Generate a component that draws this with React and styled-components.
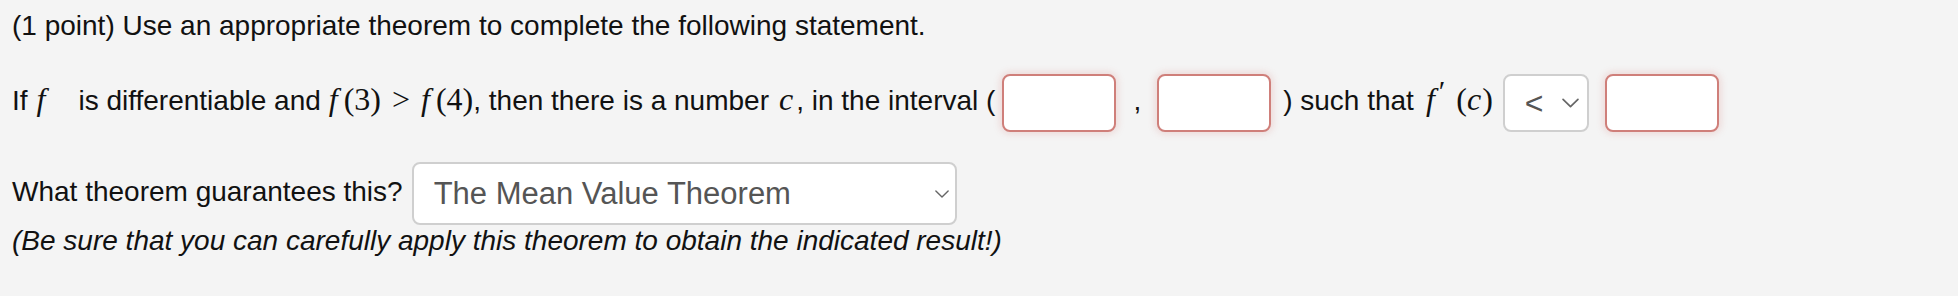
import React from "react";
import styled, { createGlobalStyle } from "styled-components";

const GlobalStyle = createGlobalStyle`
  body {
    margin: 0;
    background: #f4f4f4;
    font-family: "Liberation Sans", Helvetica, Arial, sans-serif;
    color: #111;
  }
`;

const Page = styled.div`
  padding: 6px 12px 0 12px;
  font-size: 28px;
  line-height: 40px;
`;

const Line = styled.div`
  white-space: nowrap;
  line-height: ${(props) => props.height}px;
  margin-top: ${(props) => props.top || 0}px;
`;

const Note = styled.div`
  margin-top: -3px;
  font-style: italic;
  line-height: 34px;
  white-space: nowrap;
`;

const Math = styled.span`
  font-family: "Liberation Serif", "Times New Roman", serif;
  font-size: 32px;
  margin: 0 ${(props) => props.right || 0}px 0 ${(props) => props.left || 0}px;
`;

const Var = styled.i`
  font-style: italic;
  margin-right: ${(props) => (props.gap === undefined ? 6 : props.gap)}px;
`;

const Rel = styled.span`
  margin: 0 11px;
`;

const Prime = styled.span`
  font-size: 30px;
  line-height: 0;
  vertical-align: 0.3em;
  margin: 0 11px 0 0;
`;

const Answer = styled.input`
  box-sizing: border-box;
  width: 114px;
  height: 58px;
  vertical-align: middle;
  margin: 0 ${(props) => props.right || 0}px 0 ${(props) => props.left || 0}px;
  background: #fff;
  border: 2px solid #cf7f7a;
  border-radius: 8px;
  box-shadow: 0 0 7px 2px rgba(215, 120, 115, 0.22);
  outline: none;
`;

const SelectBox = styled.span`
  box-sizing: border-box;
  display: inline-flex;
  vertical-align: middle;
  align-items: center;
  justify-content: space-between;
  width: ${(props) => props.width}px;
  height: ${(props) => props.height}px;
  padding: 0 ${(props) => props.padRight}px 0 ${(props) => props.padLeft}px;
  margin: 0 ${(props) => props.right || 0}px 0 ${(props) => props.left || 0}px;
  background: #fff;
  border: 2px solid #cfcfcf;
  border-radius: 8px;
  color: #555;
  font-size: ${(props) => props.size}px;
  line-height: 1;
`;

const Chevron = ({ w, h }) => (
  <svg width={w} height={h} viewBox="0 0 16 9" fill="none">
    <polyline
      points="1,1 8,8 15,1"
      stroke="#666"
      strokeWidth="1.6"
      strokeLinecap="round"
      strokeLinejoin="round"
    />
  </svg>
);

const App = () => {
  return (
    <>
      <GlobalStyle />
      <Page>
        <div>
          (1 point) Use an appropriate theorem to complete the following
          statement.
        </div>
        <Line top={18} height={70}>
          If
          <Math left={9} right={27}>
            <Var>f</Var>
          </Math>
          is differentiable and
          <Math left={8}>
            <Var>f</Var>(3)<Rel>&gt;</Rel>
            <Var>f</Var>(4)
          </Math>
          , then there is a number
          <Math left={10} right={1}>
            <Var gap={2}>c</Var>
          </Math>
          , in the interval (
          <Answer left={7} right={17} />,
          <Answer left={16} right={12} />) such that
          <Math left={12}>
            <Var gap={4}>f</Var>
            <Prime>′</Prime>(<Var gap={1}>c</Var>)
          </Math>
          <SelectBox
            width={86}
            height={58}
            size={32}
            padLeft={20}
            padRight={8}
            left={10}
            right={16}
          >
            <span>&lt;</span>
            <Chevron w={17} h={10} />
          </SelectBox>
          <Answer />
        </Line>
        <Line top={21} height={70}>
          What theorem guarantees this?
          <SelectBox
            width={545}
            height={63}
            size={31}
            padLeft={20}
            padRight={6}
            left={9}
          >
            <span>The Mean Value Theorem</span>
            <Chevron w={14} h={8} />
          </SelectBox>
        </Line>
        <Note>
          (Be sure that you can carefully apply this theorem to obtain the
          indicated result!)
        </Note>
      </Page>
    </>
  );
};

export default App;
